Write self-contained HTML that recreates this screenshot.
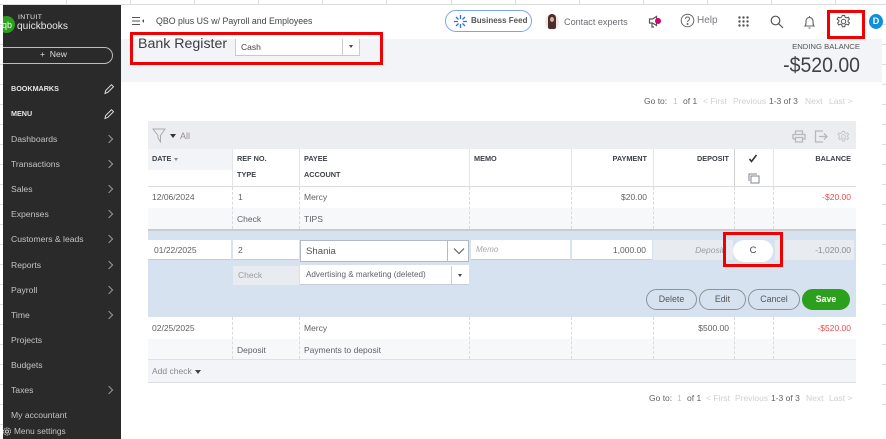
<!DOCTYPE html>
<html><head><meta charset="utf-8">
<style>
html,body{margin:0;padding:0;background:#fff}
#p{position:relative;width:886px;height:439px;overflow:hidden;background:#fff;font-family:"Liberation Sans",sans-serif;font-size:8.5px;color:#5f6266}
#p div,#p span.a,#p svg{position:absolute}
.t{white-space:nowrap;line-height:12px}
.r{text-align:right}
.nav{left:11px;color:#c4c4c4;font-size:8.600px;white-space:nowrap;line-height:12px}
.h{font-weight:bold;color:#3d4148;font-size:7.300px;white-space:nowrap;line-height:12px}
.v{border-left:1px dashed #d8dade;width:0}
.vs{border-left:1px solid #e3e5ea;width:0}
.ipt{background:#fff;border-bottom:1px solid #c3ccd8;box-sizing:border-box}
.btn{border:1px solid #8d9299;border-radius:11px;box-sizing:border-box;text-align:center;color:#555;font-size:8.800px;line-height:19px;height:21px;top:289px}
.ch{left:106px;width:5px;height:5px;border-top:1px solid #999;border-right:1px solid #999;transform:rotate(45deg)}
.gl{background:#dcdcdc}
</style></head><body><div id="p">

<!-- spreadsheet grid -->
<div class="gl" style="left:0;top:4px;width:886px;height:1px"></div>
<div class="gl" style="left:66px;top:0;width:1px;height:5px"></div>
<div class="gl" style="left:130px;top:0;width:1px;height:5px"></div>
<div class="gl" style="left:194px;top:0;width:1px;height:5px"></div>
<div class="gl" style="left:258px;top:0;width:1px;height:5px"></div>
<div class="gl" style="left:322px;top:0;width:1px;height:5px"></div>
<div class="gl" style="left:386px;top:0;width:1px;height:5px"></div>
<div class="gl" style="left:451px;top:0;width:1px;height:5px"></div>
<div class="gl" style="left:515px;top:0;width:1px;height:5px"></div>
<div class="gl" style="left:579px;top:0;width:1px;height:5px"></div>
<div class="gl" style="left:643px;top:0;width:1px;height:5px"></div>
<div class="gl" style="left:707px;top:0;width:1px;height:5px"></div>
<div class="gl" style="left:771px;top:0;width:1px;height:5px"></div>
<div class="gl" style="left:835px;top:0;width:1px;height:5px"></div>
<div style="left:882px;top:24px;width:4px;height:400px;background:repeating-linear-gradient(to bottom,#dcdcdc 0,#dcdcdc 1px,transparent 1px,transparent 20px)"></div>
<div style="left:0;top:24px;width:3px;height:415px;background:repeating-linear-gradient(to bottom,#dcdcdc 0,#dcdcdc 1px,transparent 1px,transparent 20px)"></div>

<!-- sidebar -->
<div style="left:3px;top:5px;width:118px;height:434px;background:#2a2a2a"></div>
<div style="left:3px;top:16px;width:12px;height:17px;overflow:hidden"><div style="left:-5px;top:0;width:17px;height:17px;border-radius:50%;background:#2ca01c"></div></div>
<div class="t" style="left:2px;top:19px;color:#fff;font-size:9px">qb</div>
<div class="t" style="left:18px;top:12px;color:#e8e8e8;font-size:6.800px;letter-spacing:.4px">INTUIT</div>
<div class="t" style="left:17px;top:21px;color:#e8e8e8;font-size:10.200px">quickbooks</div>
<div style="left:3px;top:47px;width:109px;height:15px;border:1px solid #bdbdbd;border-left:0;border-radius:0 9px 9px 0"></div>
<div class="t" style="left:40px;top:48px;color:#ddd;font-size:8.600px">+&nbsp;&nbsp;New</div>
<div class="t" style="left:11px;top:83px;color:#e4e4e4;font-size:7.200px;font-weight:bold">BOOKMARKS</div>
<div class="t" style="left:11px;top:108px;color:#e4e4e4;font-size:7.200px;font-weight:bold">MENU</div>
<svg style="left:103px;top:83px" width="12" height="12" viewBox="0 0 12 12" fill="none" stroke="#ddd" stroke-width="1"><path d="M2 10.5l.7-3L8.5 1.700l2 2L4.700 9.500z"/></svg>
<svg style="left:103px;top:108px" width="12" height="12" viewBox="0 0 12 12" fill="none" stroke="#ddd" stroke-width="1"><path d="M2 10.500l.7-3L8.500 1.700l2 2L4.700 9.500z"/></svg>
<div class="nav" style="top:133px">Dashboards</div><div class="ch" style="top:136px"></div>
<div class="nav" style="top:158px">Transactions</div><div class="ch" style="top:161px"></div>
<div class="nav" style="top:183px">Sales</div><div class="ch" style="top:186px"></div>
<div class="nav" style="top:208px">Expenses</div><div class="ch" style="top:211px"></div>
<div class="nav" style="top:233px">Customers &amp; leads</div><div class="ch" style="top:236px"></div>
<div class="nav" style="top:259px">Reports</div><div class="ch" style="top:262px"></div>
<div class="nav" style="top:284px">Payroll</div><div class="ch" style="top:287px"></div>
<div class="nav" style="top:309px">Time</div><div class="ch" style="top:312px"></div>
<div class="nav" style="top:334px">Projects</div>
<div class="nav" style="top:359px">Budgets</div>
<div class="nav" style="top:384px">Taxes</div><div class="ch" style="top:387px"></div>
<div class="nav" style="top:409px">My accountant</div>
<div style="left:3px;top:421px;width:118px;height:18px;background:#2a2a2a"></div>
<svg style="left:2px;top:426px" width="10" height="11" viewBox="0 0 10 10" fill="none" stroke="#ccc"><circle cx="5" cy="5" r="3.500" stroke-dasharray="1.500 .7"/><circle cx="5" cy="5" r="1.500"/></svg>
<div class="nav" style="left:14px;top:425px;font-size:8.300px">Menu settings</div>

<!-- top bar -->
<svg style="left:131px;top:15px" width="14" height="12" viewBox="0 0 14 12" stroke="#555" fill="none"><path d="M1 2.500h8M1 6h8M1 9.500h8"/><path d="M13 4v4l-2-2z" fill="#555" stroke="none"/></svg>
<div class="t" style="left:156px;top:15px;font-size:8.800px;color:#444">QBO plus US w/ Payroll and Employees</div>
<div style="left:445px;top:10px;width:87px;height:22px;border:1px solid #7aa5f0;border-radius:11px;box-sizing:border-box"></div>
<svg style="left:453px;top:14px" width="15" height="15" viewBox="0 0 15 15" stroke="#2f6fe0" stroke-width="1.300" fill="none"><path d="M7.500 1v4M7.500 10v4M1 7.500h4M10 7.500h4M3 3l2.500 2.500M12 3L9.500 5.500M3 12l2.500-2.500M12 12L9.500 9.500"/></svg>
<div class="t" style="left:471px;top:15px;font-size:8px;font-weight:bold;color:#555">Business Feed</div>
<div style="left:545px;top:14px;width:14px;height:16px;border-radius:50%;background:#f0e8e3"></div>
<div style="left:548px;top:14px;width:8px;height:15px;border-radius:4px 4px 2px 2px;background:#4a2f28"></div>
<div style="left:550px;top:17px;width:4px;height:5px;border-radius:50%;background:#d8ad98"></div>
<div class="t" style="left:564px;top:16px;font-size:9.100px;color:#6b6c72">Contact experts</div>
<svg style="left:648px;top:15px" width="16" height="14" viewBox="0 0 16 14" fill="none" stroke="#555" stroke-width="1.200"><path d="M1.500 4h3l4-2.500v9l-4-2.500h-3z"/><path d="M4 8.500V12h2"/></svg>
<div style="left:655px;top:18px;width:6px;height:6px;border-radius:50%;background:#d4006e"></div>
<svg style="left:680px;top:13px" width="15" height="15" viewBox="0 0 15 15" fill="none" stroke="#666"><circle cx="7.500" cy="7.500" r="6.300"/><path d="M5.500 6c0-2.600 4-2.600 4 0 0 1.500-2 1.500-2 3"/><circle cx="7.500" cy="11" r=".5" fill="#666"/></svg>
<div class="t" style="left:697px;top:15px;font-size:10px;color:#7a7b80">Help</div>
<svg style="left:738px;top:16px" width="11" height="11" viewBox="0 0 11 11" fill="#555"><circle cx="1.500" cy="1.500" r="1.200"/><circle cx="5.500" cy="1.500" r="1.200"/><circle cx="9.500" cy="1.500" r="1.200"/><circle cx="1.500" cy="5.500" r="1.200"/><circle cx="5.500" cy="5.500" r="1.200"/><circle cx="9.500" cy="5.500" r="1.200"/><circle cx="1.500" cy="9.500" r="1.200"/><circle cx="5.500" cy="9.500" r="1.200"/><circle cx="9.500" cy="9.500" r="1.200"/></svg>
<svg style="left:770px;top:15px" width="14" height="14" viewBox="0 0 14 14" fill="none" stroke="#555" stroke-width="1.200"><circle cx="5.500" cy="5.500" r="4.300"/><path d="M8.700 8.700L13 13"/></svg>
<svg style="left:803px;top:15px" width="13" height="15" viewBox="0 0 13 15" fill="none" stroke="#666" stroke-width="1.100"><path d="M2 11c1-1 1-2 1-5a3.500 3.500 0 017 0c0 3 0 4 1 5zM5.500 13h2M6.500 1v1"/></svg>
<svg style="left:836px;top:14px" width="15" height="15" viewBox="0 0 15 15" fill="none" stroke="#555"><circle cx="7.500" cy="7.500" r="2.200"/><path d="M6.300 1.500h2.400l.4 1.800 1.500.7 1.700-.8 1.100 2-1.300 1.200v1.400l1.300 1.200-1.100 2-1.700-.8-1.500.7-.4 1.800H6.300l-.4-1.800-1.500-.7-1.700.8-1.100-2 1.300-1.200V6.400L1.100 5.200l1.100-2 1.700.8 1.500-.7z"/></svg>
<div style="left:869px;top:14px;width:14px;height:15px;border-radius:50%;background:#0d8fdc;color:#fff;font-size:9px;font-weight:bold;text-align:center;line-height:15px">D</div>

<!-- header band -->
<div style="left:121px;top:39px;width:761px;height:43px;background:#f2f4f8"></div>
<div class="t" style="left:138px;top:36px;font-size:14.200px;line-height:17px;color:#3a3d42">Bank Register</div>
<div style="left:235px;top:39px;width:125px;height:17px;background:#fff;border-bottom:1px solid #c5c8cc;border-left:1px solid #ccc;border-right:1px solid #ccc;box-sizing:border-box"></div>
<div style="left:342px;top:39px;width:1px;height:16px;background:#ccc"></div>
<div class="t" style="left:241px;top:41px;font-size:8.500px;color:#444">Cash</div>
<div style="left:349px;top:45px;border-left:2px solid transparent;border-right:2px solid transparent;border-top:3px solid #444"></div>
<div style="left:130px;top:32px;width:253px;height:33px;border:3px solid #f00000;box-sizing:border-box"></div>
<div style="left:827px;top:10px;width:38px;height:29px;border:3px solid #f00000;box-sizing:border-box"></div>
<div class="t r" style="left:700px;width:160px;top:41px;font-size:7.700px;color:#555">ENDING BALANCE</div>
<div class="t r" style="left:700px;width:160px;top:52px;font-size:21.500px;line-height:26px;color:#3e4146;transform:scaleX(.905);transform-origin:right center">-$520.00</div>

<!-- pager top -->
<div class="t" style="left:644px;top:95px">Go to:</div>
<div class="t" style="left:673px;top:95px;color:#bfc3c7">1</div>
<div class="t" style="left:683px;top:95px">of 1</div>
<div class="t" style="left:703px;top:95px;color:#ccd0d4">&lt; First</div>
<div class="t" style="left:733px;top:95px;color:#ccd0d4">Previous</div>
<div class="t" style="left:769px;top:95px">1-3 of 3</div>
<div class="t" style="left:805px;top:95px;color:#ccd0d4">Next</div>
<div class="t" style="left:829px;top:95px;color:#ccd0d4">Last &gt;</div>

<!-- toolbar -->
<div style="left:148px;top:121px;width:708px;height:28px;background:#ecedf1"></div>
<svg style="left:152px;top:128px" width="14" height="15" viewBox="0 0 14 15" fill="none" stroke="#aaa"><path d="M1 1h12L8.500 7.500V14l-2.500-4V7.500z"/></svg>
<div style="left:170px;top:134px;border-left:3px solid transparent;border-right:3px solid transparent;border-top:4px solid #333"></div>
<div class="t" style="left:180px;top:130px;font-size:9px;color:#9a8a9a">All</div>
<svg style="left:792px;top:130px" width="14" height="13" viewBox="0 0 14 13" fill="none" stroke="#b5b8bd" stroke-width="1.300"><path d="M3.500 4V1h7v3M1 9V4.500h12V9h-2.500M3.500 9H1M3.500 7.500h7V12h-7z"/></svg>
<svg style="left:814px;top:130px" width="14" height="13" viewBox="0 0 14 13" fill="none" stroke="#b5b8bd" stroke-width="1.300"><path d="M9 12H1.500V1H9M5 6.500h8M10 3.500l3 3-3 3"/></svg>
<svg style="left:837px;top:130px" width="13" height="13" viewBox="0 0 15 15" fill="none" stroke="#c0c3c8"><circle cx="7.500" cy="7.500" r="2.200"/><path d="M6.300 1.500h2.400l.4 1.800 1.500.7 1.700-.8 1.100 2-1.300 1.200v1.400l1.300 1.200-1.100 2-1.700-.8-1.500.7-.4 1.800H6.300l-.4-1.800-1.500-.7-1.700.8-1.100-2 1.300-1.200V6.400L1.100 5.200l1.100-2 1.700.8 1.500-.7z"/></svg>

<!-- table header -->
<div style="left:148px;top:149px;width:84px;height:21px;background:#f2f4f8"></div>
<div style="left:148px;top:186px;width:708px;height:1px;background:#dcdde4"></div>
<div class="vs" style="left:232px;top:149px;height:37px"></div>
<div class="vs" style="left:299px;top:149px;height:37px"></div>
<div class="vs" style="left:469px;top:149px;height:37px"></div>
<div class="vs" style="left:571px;top:149px;height:37px"></div>
<div class="vs" style="left:653px;top:149px;height:37px"></div>
<div class="vs" style="left:734px;top:149px;height:37px;border-color:#cfd1d6"></div>
<div class="vs" style="left:773px;top:149px;height:37px"></div>
<div class="h" style="left:152px;top:153px">DATE</div>
<div style="left:174px;top:158px;border-left:2px solid transparent;border-right:2px solid transparent;border-top:3px solid #888"></div>
<div class="h" style="left:237px;top:153px">REF NO.</div>
<div class="h" style="left:237px;top:169px">TYPE</div>
<div class="h" style="left:304px;top:153px">PAYEE</div>
<div class="h" style="left:304px;top:169px">ACCOUNT</div>
<div class="h" style="left:474px;top:153px">MEMO</div>
<div class="h r" style="left:580px;width:67px;top:153px">PAYMENT</div>
<div class="h r" style="left:660px;width:69px;top:153px">DEPOSIT</div>
<div class="h r" style="left:780px;width:71px;top:153px">BALANCE</div>
<svg style="left:748px;top:154px" width="10" height="9" viewBox="0 0 10 9" fill="none" stroke="#333" stroke-width="1.600"><path d="M1.500 5l2 2.500L8.500 1"/></svg>
<svg style="left:748px;top:173px" width="12" height="11" viewBox="0 0 12 11" fill="none" stroke="#7d8590"><rect x="3" y="3" width="8" height="7"/><path d="M1 8V1h8"/></svg>

<!-- row 1 -->
<div style="left:148px;top:208px;width:708px;height:21px;background:#f7f8fa"></div>
<div class="v" style="left:232px;top:187px;height:42px"></div>
<div class="v" style="left:299px;top:187px;height:42px"></div>
<div class="v" style="left:469px;top:187px;height:42px"></div>
<div class="v" style="left:571px;top:187px;height:42px"></div>
<div class="v" style="left:653px;top:187px;height:42px"></div>
<div class="v" style="left:734px;top:187px;height:42px"></div>
<div class="v" style="left:773px;top:187px;height:42px"></div>
<div class="t" style="left:152px;top:191px">12/06/2024</div>
<div class="t" style="left:238px;top:191px">1</div>
<div class="t" style="left:304px;top:191px">Mercy</div>
<div class="t r" style="left:580px;width:67px;top:191px">$20.00</div>
<div class="t r" style="left:780px;width:71px;top:191px;color:#ef4a4a">-$20.00</div>
<div class="t" style="left:237px;top:213px">Check</div>
<div class="t" style="left:304px;top:213px">TIPS</div>

<!-- edit row -->
<div style="left:148px;top:229px;width:708px;height:88px;background:#d7e2f0;border-top:2px solid #c8ccd2;box-sizing:border-box"></div>
<div class="ipt" style="left:148px;top:240px;width:83px;height:20px"></div>
<div class="t" style="left:154px;top:244px">01/22/2025</div>
<div class="ipt" style="left:233px;top:240px;width:66px;height:20px"></div>
<div class="t" style="left:238px;top:244px">2</div>
<div class="ipt" style="left:300px;top:240px;width:169px;height:22px;border:1px solid #b5bac2"></div>
<div style="left:447px;top:241px;width:1px;height:20px;background:#b5bac2"></div>
<svg style="left:453px;top:247px" width="12" height="8" viewBox="0 0 12 8" fill="none" stroke="#555"><path d="M1 1.500l5 5 5-5"/></svg>
<div class="t" style="left:306px;top:245px;font-size:9.600px;line-height:13px;color:#555">Shania</div>
<div class="ipt" style="left:471px;top:240px;width:99px;height:20px"></div>
<div class="t" style="left:476px;top:244px;font-style:italic;color:#aaa;font-size:8px">Memo</div>
<div class="ipt" style="left:572px;top:240px;width:80px;height:20px"></div>
<div class="t r" style="left:575px;width:71px;top:244px;font-size:8.500px">1,000.00</div>
<div style="left:653px;top:240px;width:80px;height:20px;background:#e8ebf0"></div>
<div class="t r" style="left:660px;width:64px;top:244px;font-style:italic;color:#9a9da2;font-size:8.500px;overflow:hidden">Deposit</div>
<div style="left:775px;top:240px;width:79px;height:20px;background:#e8ebf0"></div>
<div class="t r" style="left:775px;width:76px;top:244px;color:#8a8d92">-1,020.00</div>
<div style="left:723px;top:232px;width:60px;height:35px;border:3px solid #f00000;box-sizing:border-box"></div>
<div style="left:733px;top:240px;width:40px;height:22px;border-radius:11px;background:#fff;color:#444;font-size:9.500px;line-height:22px;text-align:center">C</div>
<div style="left:233px;top:266px;width:66px;height:19px;background:#e8ebf0"></div>
<div class="t" style="left:238px;top:269px;color:#9a9da2">Check</div>
<div class="ipt" style="left:300px;top:265px;width:169px;height:20px"></div>
<div style="left:451px;top:266px;width:1px;height:18px;background:#c8d0da"></div>
<div style="left:458px;top:274px;border-left:2px solid transparent;border-right:2px solid transparent;border-top:3px solid #444"></div>
<div class="t" style="left:306px;top:269px;font-size:8.100px">Advertising &amp; marketing (deleted)</div>
<div class="btn" style="left:646px;width:51px">Delete</div>
<div class="btn" style="left:699px;width:47px">Edit</div>
<div class="btn" style="left:748px;width:52px">Cancel</div>
<div class="btn" style="left:802px;width:48px;background:#2ca01c;border-color:#2ca01c;color:#fff;font-weight:bold">Save</div>

<!-- row 3 -->
<div style="left:148px;top:339px;width:708px;height:20px;background:#f7f8fa"></div>
<div class="v" style="left:232px;top:317px;height:42px"></div>
<div class="v" style="left:299px;top:317px;height:42px"></div>
<div class="v" style="left:469px;top:317px;height:42px"></div>
<div class="v" style="left:571px;top:317px;height:42px"></div>
<div class="v" style="left:653px;top:317px;height:42px"></div>
<div class="v" style="left:734px;top:317px;height:42px"></div>
<div class="v" style="left:773px;top:317px;height:42px"></div>
<div class="t" style="left:152px;top:322px">02/25/2025</div>
<div class="t" style="left:304px;top:322px">Mercy</div>
<div class="t r" style="left:660px;width:69px;top:322px">$500.00</div>
<div class="t r" style="left:780px;width:71px;top:322px;color:#ef4a4a">-$520.00</div>
<div class="t" style="left:237px;top:344px">Deposit</div>
<div class="t" style="left:304px;top:344px">Payments to deposit</div>

<!-- add check -->
<div style="left:148px;top:359px;width:708px;height:24px;background:#f3f4f8;border-top:1px solid #dfe0e4;border-bottom:1px solid #dcdde2;box-sizing:border-box"></div>
<div class="t" style="left:152px;top:365px;color:#888">Add check</div>
<div style="left:195px;top:370px;border-left:3px solid transparent;border-right:3px solid transparent;border-top:4px solid #444"></div>

<!-- pager bottom -->
<div class="t" style="left:649px;top:392px">Go to:</div>
<div class="t" style="left:677px;top:392px;color:#bfc3c7">1</div>
<div class="t" style="left:687px;top:392px">of 1</div>
<div class="t" style="left:706px;top:392px;color:#ccd0d4">&lt; First</div>
<div class="t" style="left:735px;top:392px;color:#ccd0d4">Previous</div>
<div class="t" style="left:771px;top:392px">1-3 of 3</div>
<div class="t" style="left:806px;top:392px;color:#ccd0d4">Next</div>
<div class="t" style="left:829px;top:392px;color:#ccd0d4">Last &gt;</div>

</div></body></html>
